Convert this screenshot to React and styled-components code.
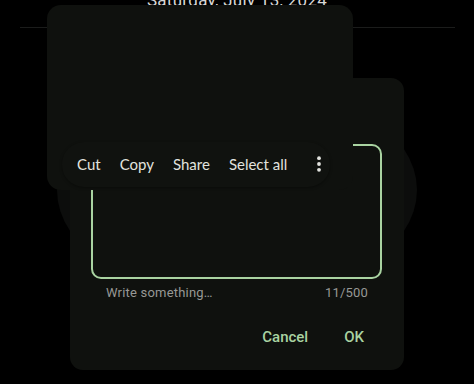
import React from "react";
import styled, { createGlobalStyle } from "styled-components";

const GlobalStyle = createGlobalStyle`
  html, body {
    margin: 0;
    padding: 0;
    background: #000;
  }
  * {
    box-sizing: border-box;
  }
`;

const Screen = styled.div`
  position: relative;
  width: 474px;
  height: 384px;
  overflow: hidden;
  background: #000;
  font-family: Roboto, "Noto Sans", sans-serif;
`;

const DateTitle = styled.div`
  margin-top: -10px;
  text-align: center;
  font-size: 17px;
  line-height: 20px;
  letter-spacing: 0.3px;
  color: #d8d8d6;
`;

const Divider = styled.div`
  margin: 17px 19px 0 20px;
  height: 1px;
  background: #1b1c1b;
`;

const Glow = styled.div`
  position: absolute;
  left: 57px;
  top: 80px;
  width: 360px;
  height: 220px;
  border-radius: 50%;
  background: #0c0d0c;
`;

const Dialog = styled.div`
  position: absolute;
  left: 70px;
  top: 78px;
  width: 334px;
  height: 292px;
  padding: 66px 22px 0 21px;
  border-radius: 13px;
  background: #0f110e;
  display: flex;
  flex-direction: column;
`;

const Field = styled.div`
  height: 135px;
  border: 2px solid #a9d3a1;
  border-radius: 10px;
`;

const HelperRow = styled.div`
  margin-top: 6px;
  padding: 0 14px 0 15px;
  display: flex;
  justify-content: space-between;
  font-size: 13px;
  line-height: 16px;
  letter-spacing: 0.2px;
  color: #979895;
`;

const ButtonRow = styled.div`
  margin-top: 18px;
  padding-right: 8px;
  display: flex;
  justify-content: flex-end;
  gap: 16px;
`;

const TextButton = styled.button`
  background: none;
  border: none;
  padding: 0 10px;
  height: 36px;
  font-family: Roboto, sans-serif;
  font-size: 15px;
  font-weight: 500;
  color: #a9d3a1;
`;

const SelectionPanel = styled.div`
  position: absolute;
  left: 47px;
  top: 5px;
  width: 306px;
  height: 185px;
  border-radius: 14px;
  background: #0f110e;
  padding: 137px 0 0 15px;
`;

const Toolbar = styled.div`
  width: 268px;
  height: 45px;
  border-radius: 22px;
  background: #10120f;
  box-shadow: 0 1px 3px rgba(0, 0, 0, 0.35);
  display: flex;
  align-items: center;
  padding: 0 0 2px 15px;
  gap: 19px;
  font-family: Lato, "Open Sans", sans-serif;
  font-size: 15px;
  color: #e2e3df;
`;

const ToolItem = styled.span`
  line-height: 18px;
`;

const MoreIcon = styled.svg`
  margin-left: 10px;
  flex: none;
`;

export default function App() {
  return (
    <>
      <GlobalStyle />
      <Screen>
        <DateTitle>Saturday, July 13, 2024</DateTitle>
        <Divider />
        <Glow />
        <Dialog>
          <Field />
          <HelperRow>
            <span>Write something…</span>
            <span>11/500</span>
          </HelperRow>
          <ButtonRow>
            <TextButton>Cancel</TextButton>
            <TextButton>OK</TextButton>
          </ButtonRow>
        </Dialog>
        <SelectionPanel>
          <Toolbar>
            <ToolItem>Cut</ToolItem>
            <ToolItem>Copy</ToolItem>
            <ToolItem>Share</ToolItem>
            <ToolItem>Select all</ToolItem>
            <MoreIcon width="6" height="16" viewBox="0 0 6 16">
              <circle cx="3" cy="2.2" r="1.9" fill="#e2e3df" />
              <circle cx="3" cy="8" r="1.9" fill="#e2e3df" />
              <circle cx="3" cy="13.8" r="1.9" fill="#e2e3df" />
            </MoreIcon>
          </Toolbar>
        </SelectionPanel>
      </Screen>
    </>
  );
}
